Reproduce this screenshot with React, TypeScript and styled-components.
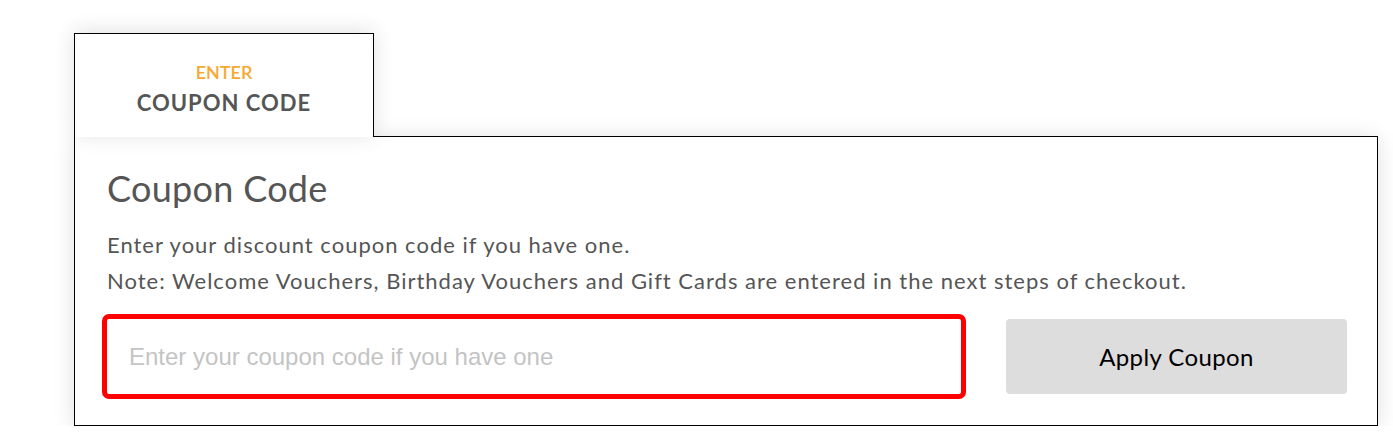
import React from 'react';
import styled, { createGlobalStyle } from 'styled-components';

const GlobalStyle = createGlobalStyle`
  html, body {
    margin: 0;
    padding: 0;
    background: #fff;
  }
  body {
    font-family: Lato, "Noto Sans", sans-serif;
    color: #555;
  }
`;

const Page = styled.div`
  padding: 33px 15px 0 74px;
`;

const Tab = styled.div`
  position: relative;
  z-index: 2;
  box-sizing: border-box;
  width: 300px;
  height: 104px;
  margin-bottom: -1px;
  border: 1px solid #000;
  border-bottom: none;
  background: #fff;
  box-shadow: 0 -2px 20px rgba(0, 0, 0, 0.12);
  display: flex;
  flex-direction: column;
  align-items: center;
  text-transform: uppercase;
  padding-top: 27px;
`;

const TabKicker = styled.span`
  color: #f5a932;
  font-size: 18px;
  font-weight: 600;
  line-height: 22px;
`;

const TabTitle = styled.span`
  color: #555;
  font-size: 22px;
  font-weight: 700;
  letter-spacing: 1px;
  line-height: 30px;
  margin-top: 5px;
`;

const Panel = styled.section`
  position: relative;
  z-index: 1;
  border: 1px solid #000;
  background: #fff;
  box-shadow: 0 2px 20px rgba(0, 0, 0, 0.13);
  padding: 30px 30px 31px 32px;
`;

const Heading = styled.h2`
  margin: 0 0 18px;
  font-size: 36px;
  font-weight: 400;
  letter-spacing: 0.3px;
  line-height: 42px;
  color: #555;
`;

const Copy = styled.p`
  margin: 0;
  font-size: 22px;
  letter-spacing: 1px;
  line-height: 36px;
  color: #555;
`;

const Form = styled.div`
  display: flex;
  align-items: center;
  gap: 45px;
  margin-top: 20px;
`;

const CodeInput = styled.input`
  flex: 0 0 854px;
  box-sizing: border-box;
  height: 75px;
  border: none;
  outline: 5px solid #ff0000;
  border-radius: 2px;
  padding: 0 22px;
  font-family: "Liberation Sans", Arial, sans-serif;
  font-size: 24px;
  color: #333;
  background: #fff;

  &::placeholder {
    color: #c4c4c4;
  }
`;

const ApplyButton = styled.button`
  flex: 1;
  height: 75px;
  border: none;
  border-radius: 4px;
  background: #dddddd;
  color: #000;
  font-family: Lato, "Noto Sans", sans-serif;
  font-size: 24px;
  letter-spacing: 0.4px;
  cursor: pointer;
`;

export default function App(): JSX.Element {
  return (
    <>
      <GlobalStyle />
      <Page>
        <Tab>
          <TabKicker>Enter</TabKicker>
          <TabTitle>Coupon Code</TabTitle>
        </Tab>
        <Panel>
          <Heading>Coupon Code</Heading>
          <Copy>Enter your discount coupon code if you have one.</Copy>
          <Copy>Note: Welcome Vouchers, Birthday Vouchers and Gift Cards are entered in the next steps of checkout.</Copy>
          <Form>
            <CodeInput placeholder="Enter your coupon code if you have one" />
            <ApplyButton>Apply Coupon</ApplyButton>
          </Form>
        </Panel>
      </Page>
    </>
  );
}
